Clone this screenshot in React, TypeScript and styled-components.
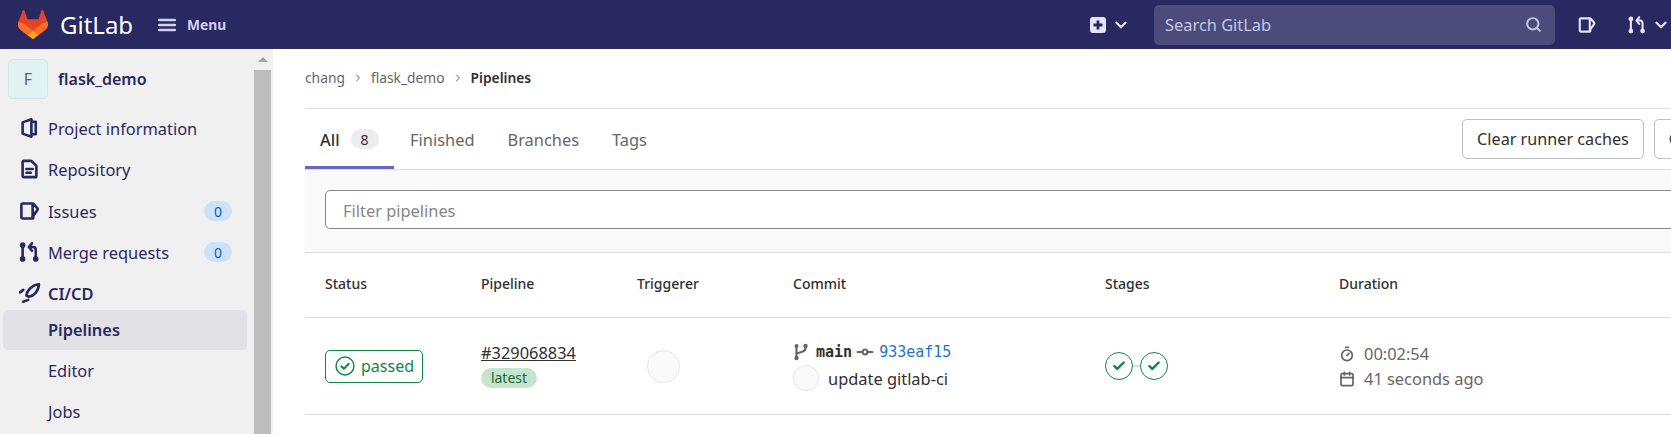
import React from "react";
import styled, { createGlobalStyle } from "styled-components";
import { Calendar, Check, ChevronDown, ChevronRight, GitCommitHorizontal, Search, Timer } from "lucide-react";

const FONT = `"Noto Sans", "Open Sans", sans-serif`;

const Global = createGlobalStyle`
  html, body { margin: 0; padding: 0; height: 100%; overflow: hidden; background: #fff; }
  body { font-family: ${FONT}; font-size: 16.4px; color: #303030; }
  * { box-sizing: border-box; }
`;

const Page = styled.div`
  display: flex;
  flex-direction: column;
  width: 1671px;
  height: 434px;
  overflow: hidden;
`;

const Navbar = styled.header`
  flex: 0 0 49px;
  display: flex;
  align-items: center;
  background: #292961;
  padding-left: 18px;
`;

const Brand = styled.div`
  display: flex;
  align-items: center;
  gap: 12px;
  color: #fff;
  font-size: 24px;
  width: 140px;
`;

const MenuButton = styled.div`
  display: flex;
  align-items: center;
  gap: 11px;
  color: #d1d0f0;
  font-size: 13.8px;
  font-weight: 700;
`;

const NavRight = styled.div`
  margin-left: auto;
  display: flex;
  align-items: center;
  color: #e4e3f6;
`;

const NavIconGroup = styled.div<{ $w: number }>`
  display: flex;
  align-items: center;
  gap: 5px;
  width: ${(p) => p.$w}px;
`;

const SearchBox = styled.div`
  width: 401px;
  height: 40px;
  margin: 0 22px 0 23px;
  padding: 0 13px 0 11px;
  display: flex;
  align-items: center;
  justify-content: space-between;
  background: #4c4c7c;
  border-radius: 5px;
  color: #c5c4e6;
`;

const Body = styled.div`
  flex: 1;
  display: flex;
  min-height: 0;
`;

const Sidebar = styled.aside`
  flex: 0 0 273px;
  display: flex;
  background: #f0f0f0;
  padding-right: 2px;
`;

const SideNav = styled.nav`
  flex: 1;
  min-width: 0;
  display: flex;
  flex-direction: column;
  padding-top: 10px;
`;

const Scrollbar = styled.div`
  flex: 0 0 17px;
  display: flex;
  flex-direction: column;
  align-items: center;
`;

const ScrollArrow = styled.div`
  flex: 0 0 5px;
  width: 0;
  margin: 8px 0;
  border-left: 5px solid transparent;
  border-right: 5px solid transparent;
  border-bottom: 5px solid #a3a3a3;
`;

const ScrollThumb = styled.div`
  flex: 1;
  width: 100%;
  background: #bdbdbd;
`;

const ProjectRow = styled.div`
  display: flex;
  align-items: center;
  gap: 10px;
  padding-left: 8px;
  height: 40px;
  margin-bottom: 10px;
  color: #292961;
  font-size: 16px;
  font-weight: 600;
`;

const Avatar = styled.div`
  width: 40px;
  height: 40px;
  display: flex;
  align-items: center;
  justify-content: center;
  background: #e0f2f1;
  border: 1px solid #d5e5e4;
  border-radius: 5px;
  color: #5f5f6e;
  font-size: 16px;
  font-weight: 400;
`;

const NavItem = styled.div<{ $active?: boolean; $sub?: boolean; $section?: boolean; $after?: number }>`
  display: flex;
  align-items: center;
  gap: 7px;
  height: ${(p) => (p.$section ? 36 : 40)}px;
  margin: 0 7px ${(p) => p.$after ?? (p.$section ? 0 : 1)}px 3px;
  padding: ${(p) => (p.$section ? "4px" : "0")} 15px 2px ${(p) => (p.$sub ? 45 : 15)}px;
  border-radius: 5px;
  color: #292961;
  background: ${(p) => (p.$active ? "#e1e1e6" : "transparent")};
  font-weight: ${(p) => (p.$active || p.$section ? 600 : 400)};
`;

const NavIcon = styled.svg`
  flex: 0 0 23px;
  width: 23px;
  height: 20px;
  fill: none;
  stroke: currentColor;
  stroke-width: 2.1;
  stroke-linecap: round;
  stroke-linejoin: round;
`;

const NavCount = styled.span`
  margin-left: auto;
  width: 28px;
  height: 20px;
  display: flex;
  align-items: center;
  justify-content: center;
  border-radius: 10px;
  background: #cbe2f9;
  color: #0b5cad;
  font-size: 14px;
`;

const Main = styled.main`
  flex: 1;
  min-width: 0;
  overflow: hidden;
  padding-left: 32px;
`;

const Content = styled.div`
  width: 1423px;
`;

const Breadcrumbs = styled.div`
  height: 60px;
  display: flex;
  align-items: center;
  gap: 7px;
  border-bottom: 1px solid #dcdcde;
  color: #666;
  font-size: 13.8px;
  padding-bottom: 2px;
`;

const CrumbCurrent = styled.span`
  color: #303030;
  font-weight: 600;
`;

const TabBar = styled.div`
  height: 61px;
  display: flex;
  border-bottom: 1px solid #dcdcde;
`;

const Tab = styled.div<{ $active?: boolean }>`
  height: 60px;
  display: flex;
  align-items: center;
  gap: 11px;
  padding: 3px ${(p) => (p.$active ? "15px" : "16.5px")} 0;
  border-bottom: 3px solid ${(p) => (p.$active ? "#6666c4" : "transparent")};
  color: ${(p) => (p.$active ? "#303030" : "#666")};
  font-weight: ${(p) => (p.$active ? 500 : 400)};
`;

const TabCount = styled.span`
  width: 28px;
  height: 20px;
  display: flex;
  align-items: center;
  justify-content: center;
  border-radius: 10px;
  background: #ececef;
  color: #303030;
  font-size: 14px;
  font-weight: 400;
`;

const TabActions = styled.div`
  margin-left: auto;
  display: flex;
  align-items: center;
  gap: 10px;
  padding-bottom: 1px;
`;

const Button = styled.button`
  height: 40px;
  padding: 0 14px;
  background: #fff;
  border: 1px solid #bfbfc3;
  border-radius: 5px;
  color: #303030;
  font-family: ${FONT};
  font-size: 16.2px;
  white-space: nowrap;
`;

const FilterBar = styled.div`
  height: 83px;
  padding: 20px;
  background: #fafafa;
  border-bottom: 1px solid #dcdcde;
`;

const FilterInput = styled.div`
  height: 39px;
  display: flex;
  align-items: center;
  padding: 1px 0 0 17px;
  background: #fff;
  border: 1px solid #868686;
  border-radius: 5px;
  color: #868686;
`;

const TableGrid = styled.div`
  display: grid;
  grid-template-columns: 156px 156px 156px 312px 234px 1fr;
  align-items: center;
  padding-left: 20px;
  border-bottom: 1px solid #dcdcde;
`;

const HeadRow = styled(TableGrid)`
  height: 65px;
  padding-bottom: 4px;
  font-size: 14px;
  font-weight: 500;
  color: #303030;
`;

const DataRow = styled(TableGrid)`
  height: 97px;
`;

const PassedBadge = styled.div`
  width: 98px;
  height: 33px;
  display: flex;
  align-items: center;
  gap: 6px;
  padding-left: 9px;
  border: 1px solid #108548;
  border-radius: 5px;
  color: #108548;
  font-size: 16px;
`;

const StackCell = styled.div<{ $lift?: number }>`
  display: flex;
  flex-direction: column;
  align-items: flex-start;
  padding-bottom: ${(p) => p.$lift ?? 0}px;
`;

const PipelineLink = styled.a`
  color: #303030;
  text-decoration: underline;
  line-height: 22px;
`;

const LatestBadge = styled.span`
  margin-top: 4px;
  height: 20px;
  width: 56px;
  display: flex;
  align-items: center;
  justify-content: center;
  border-radius: 10px;
  background: #c3e6cd;
  color: #24663b;
  font-size: 14px;
`;

const UserAvatar = styled.div<{ $size: number }>`
  width: ${(p) => p.$size}px;
  height: ${(p) => p.$size}px;
  flex: none;
  border-radius: 50%;
  background: #fafafa;
  border: 1px solid #e6e6e6;
`;

const TriggererCell = styled.div`
  padding-left: 10px;
`;

const RefLine = styled.div`
  display: flex;
  align-items: center;
  height: 22px;
  color: #666;
`;

const BranchName = styled.span`
  margin: 0 3px 0 7px;
  color: #303030;
  font-family: "DejaVu Sans Mono", monospace;
  font-size: 15px;
  font-weight: 700;
`;

const Sha = styled.a`
  margin-left: 4px;
  color: #1f75cb;
  font-family: "DejaVu Sans Mono", monospace;
  font-size: 15px;
`;

const MessageLine = styled.div`
  display: flex;
  align-items: center;
  gap: 9px;
  margin-top: 2px;
  height: 26px;
  color: #303030;
`;

const Stages = styled.div`
  display: flex;
  align-items: center;
`;

const StageConnector = styled.span`
  width: 7px;
  height: 2px;
  background: #dcdcde;
`;

const StageDot = styled.span`
  width: 28px;
  height: 28px;
  display: flex;
  align-items: center;
  justify-content: center;
  border: 1px solid #108548;
  border-radius: 50%;
  color: #108548;
`;

const DurationLine = styled.div`
  display: flex;
  align-items: center;
  gap: 9px;
  height: 25px;
  color: #666;
`;

const TopIcon = styled.svg`
  flex: none;
  width: 20px;
  height: 20px;
  fill: none;
  stroke: currentColor;
  stroke-width: 1.9;
  stroke-linecap: round;
  stroke-linejoin: round;
`;

const Logo = () => (
  <svg width="30" height="29" viewBox="0 0 25 24" aria-hidden>
    <path d="M24.507 9.5l-.034-.09L21.082.562a.896.896 0 00-1.694.091l-2.29 7.01H7.825L5.535.653a.898.898 0 00-1.694-.09L.451 9.411.416 9.5a6.297 6.297 0 002.09 7.278l.012.01.03.022 5.16 3.867 2.56 1.935 1.554 1.176a1.051 1.051 0 001.268 0l1.555-1.176 2.56-1.935 5.197-3.89.014-.01A6.297 6.297 0 0024.507 9.5z" fill="#E24329" />
    <path d="M24.507 9.5l-.034-.09a11.44 11.44 0 00-4.56 2.051l-7.447 5.632 4.742 3.584 5.197-3.89.014-.01A6.297 6.297 0 0024.507 9.5z" fill="#FC6D26" />
    <path d="M7.707 20.677l2.56 1.935 1.555 1.176a1.051 1.051 0 001.268 0l1.555-1.176 2.56-1.935-4.743-3.584-4.755 3.584z" fill="#FCA326" />
    <path d="M5.01 11.461a11.43 11.43 0 00-4.56-2.05L.416 9.5a6.297 6.297 0 002.09 7.278l.012.01.03.022 5.16 3.867 4.745-3.584-7.444-5.632z" fill="#FC6D26" />
  </svg>
);

const Hamburger = () => (
  <svg width="18" height="14" viewBox="0 0 18 14" aria-hidden>
    <path d="M1 2h16M1 7h16M1 12h16" stroke="currentColor" strokeWidth="2.4" strokeLinecap="round" />
  </svg>
);

const PlusSquare = () => (
  <svg width="18" height="18" viewBox="0 0 18 18" aria-hidden>
    <rect x="1" y="1" width="16" height="16" rx="3" fill="currentColor" />
    <path d="M9 4.5v9M4.5 9h9" stroke="#292961" strokeWidth="2.8" />
  </svg>
);

const MrGlyph = () => (
  <>
    <path d="M3.5 3v10 M14 13V6.5c0-1.4-.9-2.5-2.3-2.5H9 M11 1 8.5 4 11 7" />
    <circle cx="3.5" cy="2.5" r="1.2" fill="currentColor" />
    <circle cx="3.5" cy="13.5" r="1.2" fill="currentColor" />
    <circle cx="14" cy="13.5" r="1.2" fill="currentColor" />
  </>
);

const IssueGlyph = () => (
  <path d="M3.5 2h8c.3 0 .6.1.8.4L15.5 6c.2.3.2.6 0 .9l-3.5 5v1.6a.5.5 0 0 1-.5.5h-8a1 1 0 0 1-1-1V3a1 1 0 0 1 1-1z M11.5 2.5V13" />
);

const BranchIcon = () => (
  <svg width="16" height="18" viewBox="0 0 16 18" fill="none" stroke="currentColor" strokeWidth="2.2" strokeLinecap="round" aria-hidden>
    <path d="M3.5 4v10 M12.5 4v1.5c0 2.5-3 3.5-9 5" />
    <circle cx="3.5" cy="3" r="2" fill="currentColor" stroke="none" />
    <circle cx="3.5" cy="15" r="2.2" fill="currentColor" stroke="none" />
    <circle cx="12.5" cy="3" r="2.2" fill="currentColor" stroke="none" />
  </svg>
);

const SideIcon = ({ children }: { children: React.ReactNode }) => (
  <NavIcon viewBox="0 0 18 16">{children}</NavIcon>
);

const App = () => (
  <Page>
    <Global />
    <Navbar>
      <Brand>
        <Logo />
        GitLab
      </Brand>
      <MenuButton>
        <Hamburger />
        Menu
      </MenuButton>
      <NavRight>
        <NavIconGroup $w={42}>
          <PlusSquare />
          <ChevronDown size={18} strokeWidth={3} />
        </NavIconGroup>
        <SearchBox>
          Search GitLab
          <Search size={17} strokeWidth={2.8} color="#c5c4e6" />
        </SearchBox>
        <NavIconGroup $w={50}>
          <TopIcon viewBox="0 0 18 16"><IssueGlyph /></TopIcon>
        </NavIconGroup>
        <NavIconGroup $w={44}>
          <TopIcon viewBox="0 0 18 16"><MrGlyph /></TopIcon>
          <ChevronDown size={18} strokeWidth={3} />
        </NavIconGroup>
      </NavRight>
    </Navbar>
    <Body>
      <Sidebar>
        <SideNav>
          <ProjectRow>
            <Avatar>F</Avatar>
            flask_demo
          </ProjectRow>
          <NavItem>
            <SideIcon>
              <path d="M3.5 3.5 10.5 1v14l-7-2.5z M10.5 3h3.5v10h-3.5" />
            </SideIcon>
            Project information
          </NavItem>
          <NavItem $after={2}>
            <SideIcon>
              <path d="M4.5 1.5h6l4 4v8a1 1 0 0 1-1 1h-9a1 1 0 0 1-1-1v-11a1 1 0 0 1 1-1z M6.5 8h5 M6.5 11h3.5" />
            </SideIcon>
            Repository
          </NavItem>
          <NavItem>
            <SideIcon><IssueGlyph /></SideIcon>
            Issues
            <NavCount>0</NavCount>
          </NavItem>
          <NavItem>
            <SideIcon><MrGlyph /></SideIcon>
            Merge requests
            <NavCount>0</NavCount>
          </NavItem>
          <NavItem $section>
            <SideIcon>
              <path d="M6.5 10C7 5.5 11.5 1.5 16.5 1c0 5-4 9.5-8 10z M1.5 7.5 4 5.5 M4 15l4-1.5" />
            </SideIcon>
            CI/CD
          </NavItem>
          <NavItem $active $sub>Pipelines</NavItem>
          <NavItem $sub>Editor</NavItem>
          <NavItem $sub>Jobs</NavItem>
        </SideNav>
        <Scrollbar>
          <ScrollArrow />
          <ScrollThumb />
        </Scrollbar>
      </Sidebar>
      <Main>
        <Content>
          <Breadcrumbs>
            chang
            <ChevronRight size={12} color="#666" />
            flask_demo
            <ChevronRight size={12} color="#666" />
            <CrumbCurrent>Pipelines</CrumbCurrent>
          </Breadcrumbs>
          <TabBar>
            <Tab $active>
              All
              <TabCount>8</TabCount>
            </Tab>
            <Tab>Finished</Tab>
            <Tab>Branches</Tab>
            <Tab>Tags</Tab>
            <TabActions>
              <Button>Clear runner caches</Button>
              <Button>CI lint</Button>
            </TabActions>
          </TabBar>
          <FilterBar>
            <FilterInput>Filter pipelines</FilterInput>
          </FilterBar>
          <HeadRow>
            <span>Status</span>
            <span>Pipeline</span>
            <span>Triggerer</span>
            <span>Commit</span>
            <span>Stages</span>
            <span>Duration</span>
          </HeadRow>
          <DataRow>
            <PassedBadge>
              <svg width="20" height="20" viewBox="0 0 20 20" fill="none" stroke="currentColor" aria-hidden>
                <circle cx="10" cy="10" r="9" strokeWidth="1.4" />
                <path d="m6.3 10.3 2.6 2.5 4.8-5" strokeWidth="2" strokeLinecap="round" strokeLinejoin="round" />
              </svg>
              passed
            </PassedBadge>
            <StackCell $lift={3}>
              <PipelineLink>#329068834</PipelineLink>
              <LatestBadge>latest</LatestBadge>
            </StackCell>
            <TriggererCell>
              <UserAvatar $size={33} />
            </TriggererCell>
            <StackCell>
              <RefLine>
                <BranchIcon />
                <BranchName>main</BranchName>
                <GitCommitHorizontal size={20} strokeWidth={2.6} />
                <Sha>933eaf15</Sha>
              </RefLine>
              <MessageLine>
                <UserAvatar $size={26} />
                update gitlab-ci
              </MessageLine>
            </StackCell>
            <Stages>
              <StageDot>
                <Check size={14} strokeWidth={4.2} />
              </StageDot>
              <StageConnector />
              <StageDot>
                <Check size={14} strokeWidth={4.2} />
              </StageDot>
            </Stages>
            <StackCell>
              <DurationLine>
                <Timer size={16} strokeWidth={2.6} />
                00:02:54
              </DurationLine>
              <DurationLine>
                <Calendar size={16} strokeWidth={2.6} />
                41 seconds ago
              </DurationLine>
            </StackCell>
          </DataRow>
        </Content>
      </Main>
    </Body>
  </Page>
);

export default App;
